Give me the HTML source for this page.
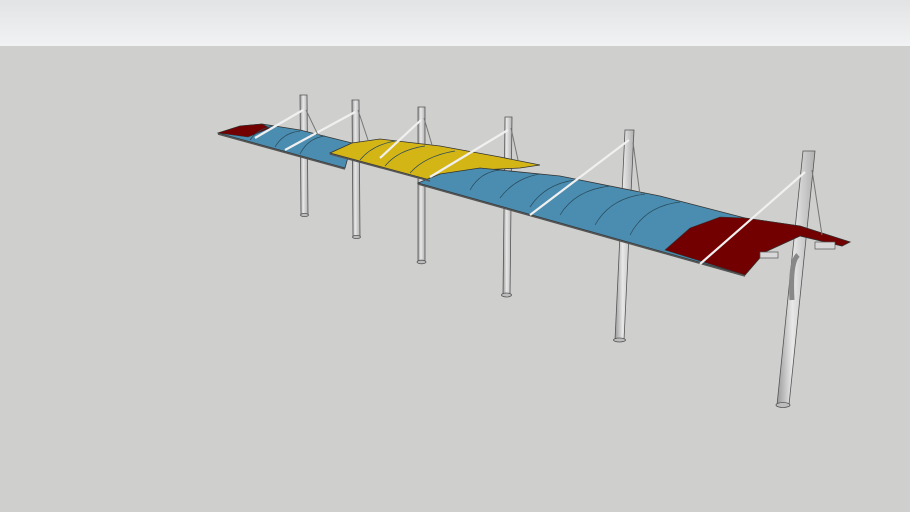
<!DOCTYPE html>
<html><head><meta charset="utf-8"><style>
html,body{margin:0;padding:0;width:910px;height:512px;overflow:hidden;background:#cfcfcd}
svg{display:block}
</style></head><body>
<svg width="910" height="512" viewBox="0 0 910 512" xmlns="http://www.w3.org/2000/svg">
<defs>
<linearGradient id="sky" x1="0" y1="0" x2="0" y2="1"><stop offset="0" stop-color="#e1e3e5"/><stop offset="1" stop-color="#f1f2f3"/></linearGradient>
<linearGradient id="post" x1="0" y1="0" x2="1" y2="0"><stop offset="0" stop-color="#9a9a9a"/><stop offset="0.4" stop-color="#e8e8e8"/><stop offset="1" stop-color="#b0b0b0"/></linearGradient>
</defs>
<rect x="0" y="0" width="910" height="46" fill="url(#sky)"/>
<rect x="0" y="46" width="910" height="466" fill="#cfcfcd"/>
<g stroke="#555" stroke-width="0.8" fill="url(#post)">
<polygon points="300,95 307,95 308,215 301,215"/>
<polygon points="352,100 359,100 360,237 353,237"/>
<polygon points="418,107 425,107 425,262 418,262"/>
<polygon points="505,117 512,117 510,295 503,295"/>
<polygon points="625,130 634,130 624,340 615,340"/>
<polygon points="803,151 815,151 789,405 777,405"/>
</g>
<g fill="#bdbdbd" stroke="#555" stroke-width="0.8">
<ellipse cx="304.5" cy="215" rx="4" ry="1.6"/>
<ellipse cx="356.5" cy="237" rx="4" ry="1.6"/>
<ellipse cx="421.5" cy="262" rx="4.5" ry="1.8"/>
<ellipse cx="506.5" cy="295" rx="5" ry="2"/>
<ellipse cx="619.5" cy="340" rx="6" ry="2"/>
<ellipse cx="783" cy="405" rx="7" ry="2.5"/>
</g>
<!-- left section -->
<polygon points="218,133 240,126 262,124 300,130 352,143 345,168" fill="#4a8db0" stroke="#333" stroke-width="0.8"/>
<polygon points="218,133 240,126 262,124 270,128 248,137" fill="#720000" stroke="#333" stroke-width="0.6"/>
<!-- yellow -->
<polygon points="330,153 352,143 380,139 440,146 500,157 540,165 520,168 480,170 430,180" fill="#d4b516" stroke="#333" stroke-width="0.8"/>
<!-- big blue -->
<polygon points="418,183 440,174 480,168 560,176 660,196 745,218 800,226 850,242 842,246 800,236 765,252 745,275" fill="#4a8db0" stroke="#333" stroke-width="0.8"/>
<polygon points="665,250 690,228 720,217 745,218 800,226 850,242 842,246 800,236 765,252 745,275" fill="#720000" stroke="#333" stroke-width="0.6"/>
<g stroke="#2a4a5a" stroke-width="0.7" fill="none">
<path d="M470,190 Q480,172 500,170"/><path d="M500,198 Q515,178 540,174"/><path d="M530,207 Q545,184 575,180"/><path d="M560,215 Q575,190 610,186"/><path d="M595,225 Q610,198 645,194"/><path d="M630,235 Q645,206 680,202"/>
<path d="M250,140 Q258,128 275,126"/><path d="M275,147 Q283,133 300,131"/><path d="M300,154 Q308,138 325,136"/>
<path d="M360,160 Q372,145 395,141"/><path d="M385,166 Q398,150 425,146"/><path d="M410,173 Q425,156 455,151"/>
</g>
<g stroke="#555" stroke-width="1.5" fill="none">
<line x1="418" y1="184" x2="745" y2="276"/>
<line x1="218" y1="134" x2="345" y2="169"/>
<line x1="330" y1="154" x2="430" y2="181"/>
</g>
<g stroke="#f0f0f0" stroke-width="2.2">
<line x1="303" y1="110" x2="255" y2="138"/>
<line x1="355" y1="112" x2="285" y2="150"/>
<line x1="421" y1="120" x2="380" y2="158"/>
<line x1="508" y1="130" x2="430" y2="177"/>
<line x1="629" y1="140" x2="530" y2="215"/>
<line x1="805" y1="172" x2="700" y2="264"/>
</g>
<g stroke="#777" stroke-width="1">
<line x1="306" y1="110" x2="318" y2="135"/><line x1="358" y1="110" x2="368" y2="140"/><line x1="424" y1="118" x2="432" y2="145"/><line x1="511" y1="128" x2="518" y2="160"/><line x1="633" y1="142" x2="640" y2="195"/><line x1="812" y1="170" x2="822" y2="235"/>
</g>
<path d="M798,255 Q790,262 792,300" stroke="#888" stroke-width="5" fill="none"/>
<rect x="815" y="242" width="20" height="7" fill="#d8d8d8" stroke="#555" stroke-width="0.7"/>
<rect x="760" y="252" width="18" height="6" fill="#d8d8d8" stroke="#555" stroke-width="0.7"/>
</svg>
</body></html>
